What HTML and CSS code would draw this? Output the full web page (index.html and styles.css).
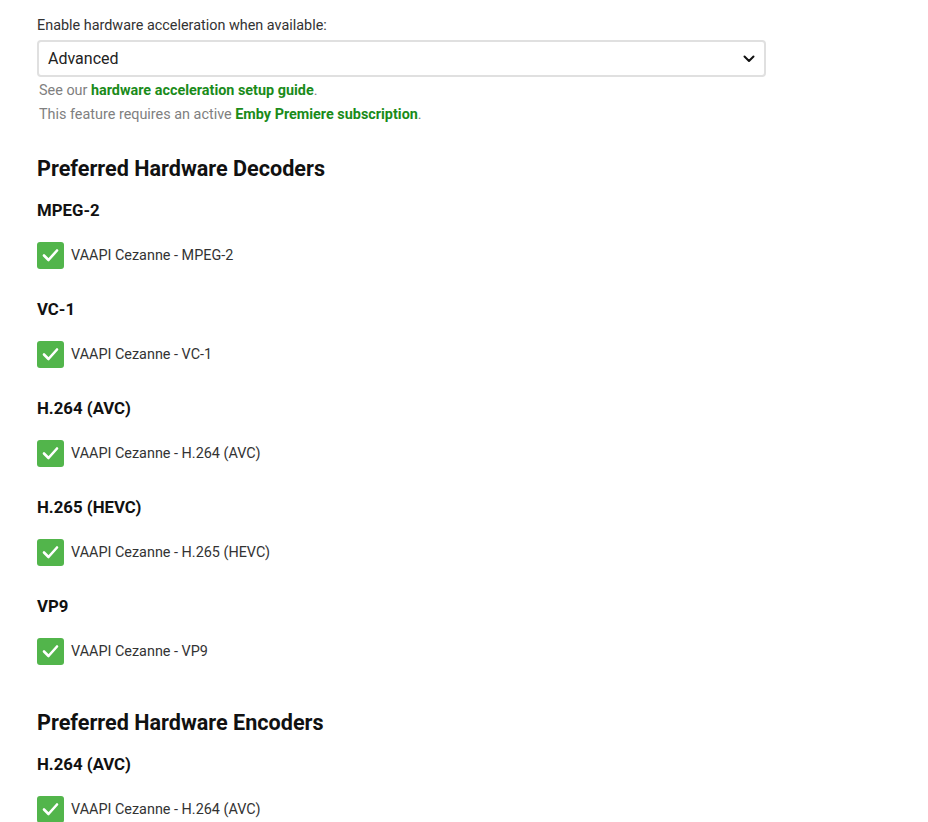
FILE: index.html
```html
<!DOCTYPE html>
<html>
<head>
  <meta charset="utf-8">
  <title>Transcoding - Hardware Acceleration</title>
  <link rel="stylesheet" href="styles.css">
</head>
<body>
  <div class="container">
    <!-- Hardware acceleration mode -->
    <div class="field">
      <label class="field-label">Enable hardware acceleration when available:</label>
      <div class="select">
        <span class="select-value">Advanced</span>
        <svg class="select-arrow" width="14" height="14" viewBox="0 0 14 14">
          <path d="M2.5 4.5 L7 9 L11.5 4.5" fill="none" stroke="#111" stroke-width="2" stroke-linecap="round" stroke-linejoin="round"/>
        </svg>
      </div>
      <div class="field-help">See our <a href="#">hardware acceleration setup guide</a>.</div>
      <div class="field-help">This feature requires an active <a href="#">Emby Premiere subscription</a>.</div>
    </div>

    <!-- Decoders -->
    <h2 class="section-title">Preferred Hardware Decoders</h2>

    <div class="codec">
      <h3 class="codec-title">MPEG-2</h3>
      <label class="check">
        <span class="check-box"><svg width="27" height="27" viewBox="0 0 27 27"><path d="M7 13.5 L11.5 18 L20 8.5" fill="none" stroke="#fff" stroke-width="2.6" stroke-linecap="round" stroke-linejoin="round"/></svg></span>
        <span class="check-text">VAAPI Cezanne - MPEG-2</span>
      </label>
    </div>

    <div class="codec">
      <h3 class="codec-title">VC-1</h3>
      <label class="check">
        <span class="check-box"><svg width="27" height="27" viewBox="0 0 27 27"><path d="M7 13.5 L11.5 18 L20 8.5" fill="none" stroke="#fff" stroke-width="2.6" stroke-linecap="round" stroke-linejoin="round"/></svg></span>
        <span class="check-text">VAAPI Cezanne - VC-1</span>
      </label>
    </div>

    <div class="codec">
      <h3 class="codec-title">H.264 (AVC)</h3>
      <label class="check">
        <span class="check-box"><svg width="27" height="27" viewBox="0 0 27 27"><path d="M7 13.5 L11.5 18 L20 8.5" fill="none" stroke="#fff" stroke-width="2.6" stroke-linecap="round" stroke-linejoin="round"/></svg></span>
        <span class="check-text">VAAPI Cezanne - H.264 (AVC)</span>
      </label>
    </div>

    <div class="codec">
      <h3 class="codec-title">H.265 (HEVC)</h3>
      <label class="check">
        <span class="check-box"><svg width="27" height="27" viewBox="0 0 27 27"><path d="M7 13.5 L11.5 18 L20 8.5" fill="none" stroke="#fff" stroke-width="2.6" stroke-linecap="round" stroke-linejoin="round"/></svg></span>
        <span class="check-text">VAAPI Cezanne - H.265 (HEVC)</span>
      </label>
    </div>

    <div class="codec">
      <h3 class="codec-title">VP9</h3>
      <label class="check">
        <span class="check-box"><svg width="27" height="27" viewBox="0 0 27 27"><path d="M7 13.5 L11.5 18 L20 8.5" fill="none" stroke="#fff" stroke-width="2.6" stroke-linecap="round" stroke-linejoin="round"/></svg></span>
        <span class="check-text">VAAPI Cezanne - VP9</span>
      </label>
    </div>

    <!-- Encoders -->
    <h2 class="section-title encoders">Preferred Hardware Encoders</h2>

    <div class="codec">
      <h3 class="codec-title">H.264 (AVC)</h3>
      <label class="check">
        <span class="check-box"><svg width="27" height="27" viewBox="0 0 27 27"><path d="M7 13.5 L11.5 18 L20 8.5" fill="none" stroke="#fff" stroke-width="2.6" stroke-linecap="round" stroke-linejoin="round"/></svg></span>
        <span class="check-text">VAAPI Cezanne - H.264 (AVC)</span>
      </label>
    </div>
  </div>
</body>
</html>
```

FILE: styles.css
```css
body {
  font-family: Roboto, 'Noto Sans', sans-serif;
  margin: 0;
  padding: 0;
  color: #222;
  background: #fff;
}

.container {
  padding: 17px 0 0 37px;
  width: 729px;
}

.field-label {
  display: block;
  font-size: 14.4px;
  line-height: 17px;
  color: #333;
  margin-bottom: 6px;
}

.select {
  display: flex;
  align-items: center;
  justify-content: space-between;
  height: 37px;
  box-sizing: border-box;
  border: 2px solid #e0e0e0;
  border-radius: 4px;
  padding: 0 8px 0 9px;
  margin-bottom: 4px;
}

.select-value {
  font-size: 16px;
  color: #222;
}

.select-arrow {
  display: block;
}

.field-help {
  font-size: 14.4px;
  line-height: 20px;
  color: #808080;
  padding-left: 2px;
  margin-bottom: 4px;
}

.field-help a {
  color: #1a8b1a;
  font-weight: 700;
  text-decoration: none;
}

.section-title {
  margin: 30px 0 17px 0;
  font-size: 21.6px;
  line-height: 28px;
  font-weight: 700;
  color: #111;
}

.section-title.encoders {
  margin-top: 44px;
}

.codec {
  margin-bottom: 30px;
}

.codec-title {
  margin: 0 0 22px 0;
  font-size: 16.8px;
  line-height: 20px;
  font-weight: 700;
  color: #111;
}

.check {
  display: flex;
  align-items: center;
  gap: 7px;
  cursor: pointer;
}

.check-box {
  width: 27px;
  height: 27px;
  border-radius: 3px;
  background: #52b54b;
  display: flex;
}

.check-text {
  font-size: 14.4px;
  color: #333;
}
```
